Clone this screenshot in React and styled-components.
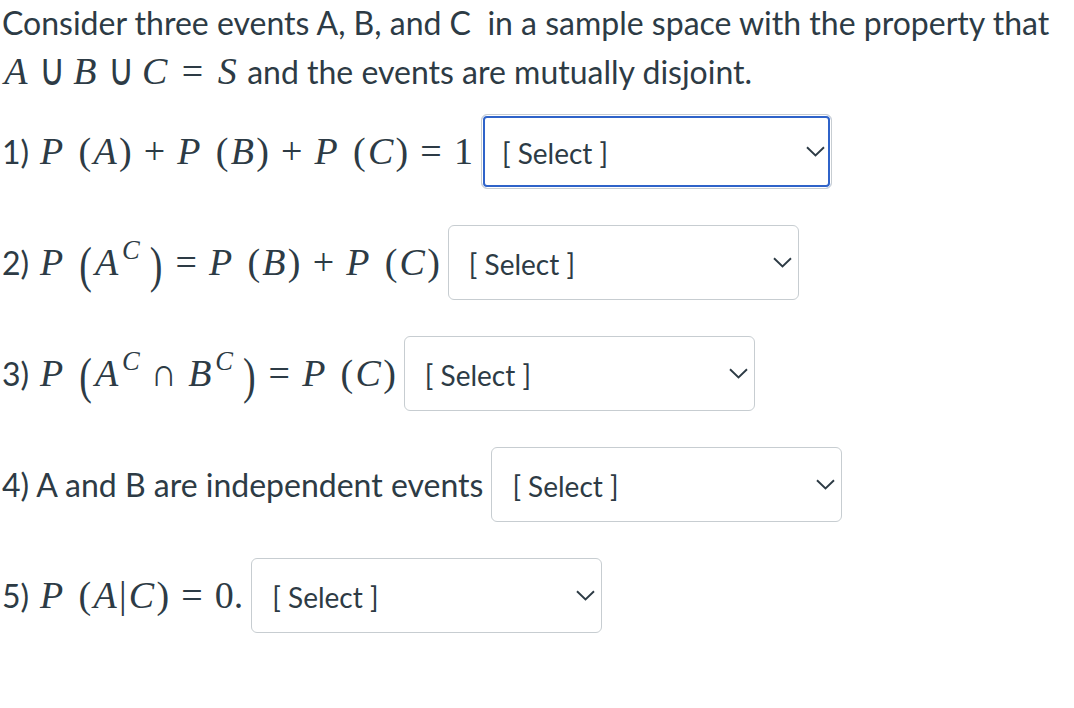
import React from 'react';
import styled, { createGlobalStyle } from 'styled-components';

const Global = createGlobalStyle`
  html, body { margin: 0; padding: 0; background: #ffffff; }
  body {
    font-family: Lato, "Liberation Sans", sans-serif;
    color: #2d3b45;
  }
`;

const Page = styled.div`
  width: 1074px;
  height: 708px;
  overflow: hidden;
  box-sizing: border-box;
  padding-left: 2px;
  font-size: 32px;
`;

const Intro = styled.p`
  margin: -2px 0 18px;
  line-height: 49px;
`;

const Question = styled.div`
  display: flex;
  align-items: baseline;
  gap: 8px;
  height: 75px;
  margin-bottom: 36px;
`;

const Label = styled.div`
  white-space: nowrap;
  line-height: 1;
`;

const Num = styled.span`
  margin-right: 11px;
`;

const Math = styled.span`
  font-family: "Liberation Serif", "DejaVu Serif", serif;
  font-size: 38px;
  line-height: 1;
  white-space: nowrap;
`;

const V = styled.i`
  font-style: italic;
  margin: 0 0.06em;
`;

const Fn = styled.i`
  font-style: italic;
  margin-right: 0.4em;
`;

const Bin = styled.span`
  margin: 0 0.32em;
`;

const SetOp = styled.span`
  display: inline-block;
  font-family: "DejaVu Sans", sans-serif;
  font-weight: 200;
  font-size: 0.95em;
  transform: scaleY(${p => p.$stretch ?? 1.25});
  transform-origin: 50% 75%;
  margin: 0 ${p => p.$r ?? 0.25}em 0 ${p => p.$l ?? 0.25}em;
`;

const Rel = styled.span`
  margin: 0 0.32em;
`;

const Paren = styled.span``;

const BigParen = styled.span`
  display: inline-block;
  transform: translateY(4px) scaleY(1.35);
  transform-origin: 50% 60%;
  margin: 0 0.02em 0 ${p => (p.$close ? 0.21 : 0.02)}em;
`;

const Sup = styled.i`
  font-style: italic;
  font-size: 0.7em;
  vertical-align: 0.62em;
  line-height: 0;
  margin: 0 0.08em 0 0.06em;
`;

const Select = styled.div`
  box-sizing: border-box;
  flex: none;
  width: 351px;
  height: 75px;
  border: 1px solid #c7cdd1;
  border-radius: 6px;
  background: #ffffff;
  display: flex;
  align-items: center;
  justify-content: space-between;
  padding: 0 6px 0 20px;
  box-shadow: ${p => (p.$focused ? 'inset 0 0 0 1px #ffffff, inset 0 0 0 3px #2f63c9' : 'none')};
`;

const SelectText = styled.span`
  font-size: 28px;
  line-height: 34px;
  margin-top: 3px;
  color: #2d3b45;
`;

const Chevron = () => (
  <svg width="19" height="11" viewBox="0 0 19 11" fill="none">
    <polyline points="1,1.2 9.5,9.5 18,1.2" stroke="#2d3b45" strokeWidth="1.9" strokeLinejoin="miter" />
  </svg>
);

const Dropdown = ({ focused }) => (
  <Select $focused={focused}>
    <SelectText>[ Select ]</SelectText>
    <Chevron />
  </Select>
);

export default function App() {
  return (
    <Page>
      <Global />
      <Intro>
        Consider three events A, B, and C{'\u00a0'} in a sample space with the property that{' '}
        <Math>
          <V>A</V><SetOp $l={0.26} $r={0.16}>∪</SetOp><V>B</V><SetOp $l={0.26} $r={0.16}>∪</SetOp><V>C</V>
          <Rel>=</Rel><V>S</V>
        </Math>{' '}
        and the events are mutually disjoint.
      </Intro>

      <Question>
        <Label>
          <Num>1)</Num>
          <Math>
            <Fn>P</Fn><Paren>(</Paren><V>A</V><Paren>)</Paren>
            <Bin>+</Bin>
            <Fn>P</Fn><Paren>(</Paren><V>B</V><Paren>)</Paren>
            <Bin>+</Bin>
            <Fn>P</Fn><Paren>(</Paren><V>C</V><Paren>)</Paren>
            <Rel>=</Rel>1
          </Math>
        </Label>
        <Dropdown focused />
      </Question>

      <Question>
        <Label>
          <Num>2)</Num>
          <Math>
            <Fn>P</Fn><BigParen>(</BigParen><V>A</V><Sup>C</Sup><BigParen $close>)</BigParen>
            <Rel>=</Rel>
            <Fn>P</Fn><Paren>(</Paren><V>B</V><Paren>)</Paren>
            <Bin>+</Bin>
            <Fn>P</Fn><Paren>(</Paren><V>C</V><Paren>)</Paren>
          </Math>
        </Label>
        <Dropdown />
      </Question>

      <Question>
        <Label>
          <Num>3)</Num>
          <Math>
            <Fn>P</Fn><BigParen>(</BigParen><V>A</V><Sup>C</Sup><SetOp $stretch={1.1}>∩</SetOp><V>B</V><Sup>C</Sup>
            <BigParen $close>)</BigParen>
            <Rel>=</Rel>
            <Fn>P</Fn><Paren>(</Paren><V>C</V><Paren>)</Paren>
          </Math>
        </Label>
        <Dropdown />
      </Question>

      <Question>
        <Label>4) A and B are independent events</Label>
        <Dropdown />
      </Question>

      <Question>
        <Label>
          <Num>5)</Num>
          <Math>
            <Fn>P</Fn><Paren>(</Paren><V>A</V>|<V>C</V><Paren>)</Paren>
            <Rel>=</Rel>0.
          </Math>
        </Label>
        <Dropdown />
      </Question>
    </Page>
  );
}
